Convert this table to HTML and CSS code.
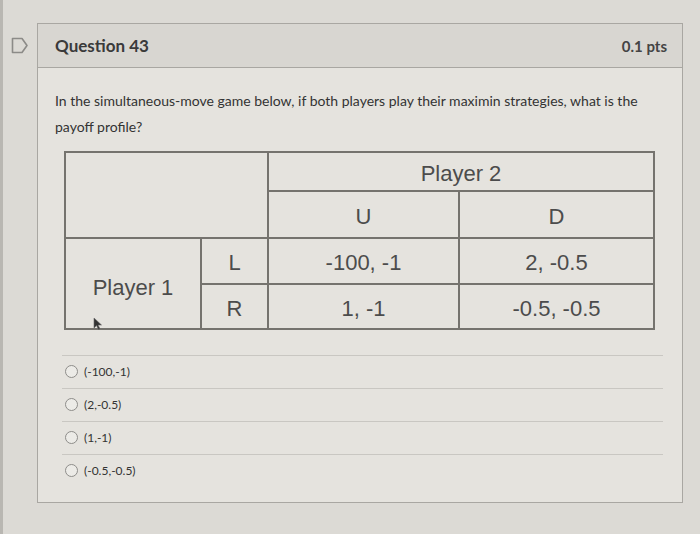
FILE: index.html
```html
<!DOCTYPE html>
<html>
<head>
<meta charset="utf-8">
<link rel="stylesheet" href="styles.css">
</head>
<body>
<div class="page">
  <div class="side">
    <svg class="flag" width="18" height="17" viewBox="0 0 18 17"><path d="M1.5 1.5 H11 L16 8.5 L11 15.5 H1.5 Z" fill="none" stroke="#8c8b88" stroke-width="1.6" stroke-linejoin="round"/></svg>
  </div>
  <div class="card">
    <div class="head">
      <span class="qtitle">Question 43</span>
      <span class="pts">0.1 pts</span>
    </div>
    <div class="body">
      <p class="qtext">In the simultaneous-move game below, if both players play their maximin strategies, what is the payoff profile?</p>
      <div class="tablewrap">
        <table class="game">
          <colgroup><col class="c1"><col class="c2"><col class="c3"><col class="c4"></colgroup>
          <tr class="r1"><td colspan="2" rowspan="2"></td><td colspan="2">Player 2</td></tr>
          <tr class="r2"><td>U</td><td>D</td></tr>
          <tr class="r3"><td rowspan="2" class="p1">Player 1</td><td>L</td><td>-100, -1</td><td>2, -0.5</td></tr>
          <tr class="r4"><td>R</td><td>1, -1</td><td>-0.5, -0.5</td></tr>
        </table>
        <svg class="cursor" width="10" height="13" viewBox="0 0 10 13"><path d="M1 1 L1 11 L3.5 8.5 L5.5 12.5 L7 11.8 L5 8 L8.5 8 Z" fill="#333" stroke="#666" stroke-width="0.6"/></svg>
      </div>
      <div class="options">
        <label class="opt"><span class="radio"></span>(-100,-1)</label>
        <label class="opt"><span class="radio"></span>(2,-0.5)</label>
        <label class="opt"><span class="radio"></span>(1,-1)</label>
        <label class="opt"><span class="radio"></span>(-0.5,-0.5)</label>
      </div>
    </div>
  </div>
</div>
</body>
</html>
```

FILE: styles.css
```css
html, body {
  margin: 0;
  padding: 0;
}
body {
  background: #dcdad5;
  font-family: Lato, "Liberation Sans", sans-serif;
  color: #333;
  width: 700px;
  height: 534px;
  overflow: hidden;
  border-left: 3px solid #b9b7b2;
  box-sizing: border-box;
}
.page {
  display: flex;
  padding-top: 23px;
}
.side {
  width: 34px;
  padding-top: 14px;
  padding-left: 8px;
  box-sizing: border-box;
}
.flag {
  display: block;
}
.card {
  width: 646px;
  height: 480px;
  border: 1px solid #a9a7a2;
  box-sizing: border-box;
  background: #e5e3de;
}
.head {
  height: 44px;
  background: #d8d6d1;
  border-bottom: 1px solid #a9a7a2;
  box-sizing: border-box;
  display: flex;
  align-items: center;
  justify-content: space-between;
  padding: 0 15px 0 17px;
}
.qtitle {
  font-size: 17px;
  font-weight: 700;
  color: #3a3a3a;
}
.pts {
  font-size: 15px;
  font-weight: 700;
  color: #444;
}
.body {
  padding: 20px 17px 0 17px;
}
.qtext {
  margin: 0;
  font-size: 14px;
  line-height: 26px;
  color: #333;
  width: 600px;
}
.tablewrap {
  position: relative;
  margin: 11px 0 0 9px;
}
.game {
  border-collapse: collapse;
  table-layout: fixed;
  width: 589px;
  font-family: "Liberation Sans", Arial, sans-serif;
  font-size: 22px;
  color: #4c4c4c;
  text-align: center;
}
.c1 { width: 136px; }
.c2 { width: 67px; }
.c3 { width: 191px; }
.c4 { width: 195px; }
.game td {
  border: 2px solid #75736e;
  padding: 4px 0 0 0;
}
.game td.p1 {
  padding-top: 8px;
}
.r1 { height: 39px; }
.r2 { height: 47px; }
.r3 { height: 46px; }
.r4 { height: 45px; }
.cursor {
  position: absolute;
  left: 29px;
  top: 166px;
}
.options {
  margin: 25px 0 0 7px;
  width: 601px;
}
.opt {
  display: flex;
  align-items: center;
  height: 33px;
  border-top: 1px solid #c9c7c2;
  font-size: 12px;
  color: #333;
  padding-left: 3px;
  padding-bottom: 1px;
  box-sizing: border-box;
}
.radio {
  width: 11px;
  height: 11px;
  border: 1px solid #8e8d8a;
  border-radius: 50%;
  margin-right: 6px;
  background: #ecebe7;
}
```
